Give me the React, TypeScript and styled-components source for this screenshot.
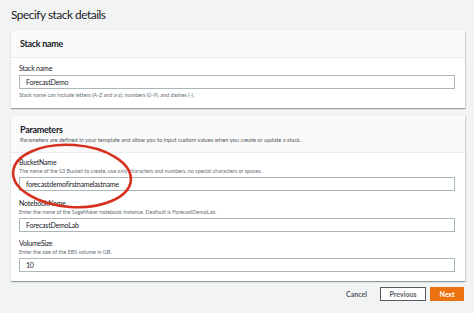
import styled, { createGlobalStyle } from "styled-components";

const GlobalStyle = createGlobalStyle`
  html, body {
    margin: 0;
    padding: 0;
    background: #f2f3f3;
  }
  body {
    font-family: Lato, "Open Sans", sans-serif;
    color: #16191f;
  }
`;

const Page = styled.div`
  position: relative;
  width: 474px;
  height: 313px;
  box-sizing: border-box;
  padding: 5px 9px 0 11px;
  overflow: hidden;
`;

const Title = styled.h1`
  margin: 0 0 6px 0;
  font-size: 11.8px;
  font-weight: 400;
  letter-spacing: -0.45px;
  line-height: 20px;
  color: #16191f;
`;

const Panel = styled.section`
  background: #ffffff;
  box-shadow: 0 1px 1px rgba(0, 28, 36, 0.3), 1px 1px 1px rgba(0, 28, 36, 0.12);
  margin-bottom: 8px;
`;

const PanelHeader = styled.header<{ $tall?: boolean }>`
  background: #fafafa;
  border-bottom: 1px solid #eaeded;
  padding: ${(p) => (p.$tall ? "8px 9px 8px" : "7px 9px 7px")};
`;

const PanelTitle = styled.h2`
  margin: 0;
  font-size: 9px;
  font-weight: 700;
  letter-spacing: -0.3px;
  line-height: 12px;
`;

const PanelDesc = styled.p`
  margin: 0;
  font-size: 5.8px;
  letter-spacing: -0.05px;
  line-height: 8px;
  color: #545b64;
`;

const PanelBody = styled.div<{ $top: number; $bottom: number }>`
  padding: ${(p) => p.$top}px 10px ${(p) => p.$bottom}px 8px;
  display: flex;
  flex-direction: column;
  gap: 7.5px;
`;

const Field = styled.div`
  display: flex;
  flex-direction: column;
`;

const Label = styled.label`
  font-size: 7px;
  letter-spacing: -0.2px;
  line-height: 9px;
  color: #16191f;
`;

const Hint = styled.div<{ $after?: boolean }>`
  font-size: 5.5px;
  letter-spacing: -0.05px;
  line-height: 8px;
  color: #687078;
  margin: ${(p) => (p.$after ? "2px 0 0" : "0 0 2px")};
`;

const Input = styled.div<{ $gap?: number }>`
  height: 14px;
  box-sizing: border-box;
  margin-top: ${(p) => p.$gap ?? 0}px;
  border: 1px solid #aab7b8;
  background: #fff;
  padding-left: 6px;
  font-size: 7px;
  letter-spacing: -0.2px;
  line-height: 12px;
  color: #16191f;
`;

const Footer = styled.div`
  display: flex;
  justify-content: flex-end;
  align-items: center;
  gap: 4px;
  padding-right: 1px;
  margin-top: -2px;
`;

const Button = styled.button<{ $variant: "link" | "normal" | "primary" }>`
  height: 14px;
  box-sizing: border-box;
  font-family: Lato, "Open Sans", sans-serif;
  font-size: 7px;
  font-weight: 700;
  padding: 0;
  cursor: pointer;
  color: ${(p) => (p.$variant === "primary" ? "#ffffff" : "#545b64")};
  background: ${(p) => (p.$variant === "primary" ? "#ec7211" : p.$variant === "normal" ? "#ffffff" : "transparent")};
  border: ${(p) =>
    p.$variant === "primary" ? "1px solid #ec7211" : p.$variant === "normal" ? "1px solid #545b64" : "none"};
  width: ${(p) => (p.$variant === "primary" ? "34px" : p.$variant === "normal" ? "46px" : "auto")};
  margin-right: ${(p) => (p.$variant === "link" ? "9px" : "0")};
`;

const Annotation = styled.svg`
  position: absolute;
  left: 0;
  top: 0;
  pointer-events: none;
`;

const params = [
  {
    label: "BucketName",
    hint: "The name of the S3 Bucket to create, use only characters and numbers, no special characters or spaces.",
    value: "forecastdemofirstnamelastname",
  },
  {
    label: "NotebookName",
    hint: "Enter the name of the SageMaker notebook instance. Deafault is ForecastDemoLab.",
    value: "ForecastDemoLab",
  },
  {
    label: "VolumeSize",
    hint: "Enter the size of the EBS volume in GB.",
    value: "10",
  },
];

export default function App() {
  return (
    <>
      <GlobalStyle />
      <Page>
        <Title>Specify stack details</Title>

        <Panel>
          <PanelHeader>
            <PanelTitle>Stack name</PanelTitle>
          </PanelHeader>
          <PanelBody $top={6} $bottom={9}>
            <Field>
              <Label>Stack name</Label>
              <Input $gap={2}>ForecastDemo</Input>
              <Hint $after>Stack name can include letters (A-Z and a-z), numbers (0-9), and dashes (-).</Hint>
            </Field>
          </PanelBody>
        </Panel>

        <Panel>
          <PanelHeader $tall>
            <PanelTitle>Parameters</PanelTitle>
            <PanelDesc>
              Parameters are defined in your template and allow you to input custom values when you create or update a stack.
            </PanelDesc>
          </PanelHeader>
          <PanelBody $top={5} $bottom={9}>
            {params.map((f) => (
              <Field key={f.label}>
                <Label>{f.label}</Label>
                <Hint>{f.hint}</Hint>
                <Input>{f.value}</Input>
              </Field>
            ))}
          </PanelBody>
        </Panel>

        <Footer>
          <Button $variant="link">Cancel</Button>
          <Button $variant="normal">Previous</Button>
          <Button $variant="primary">Next</Button>
        </Footer>

        <Annotation width="474" height="313" viewBox="0 0 474 313">
          <ellipse
            cx="72"
            cy="176"
            rx="59"
            ry="31"
            transform="rotate(4 72 176)"
            fill="none"
            stroke="#d7301f"
            strokeWidth="2.6"
          />
        </Annotation>
      </Page>
    </>
  );
}
